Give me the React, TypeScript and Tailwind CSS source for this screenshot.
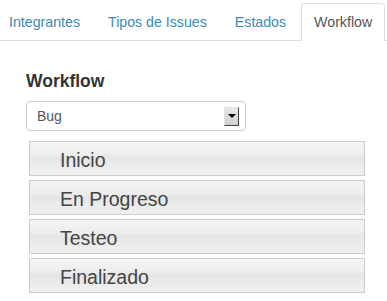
import React from "react";

const tabs = ["Integrantes", "Tipos de Issues", "Estados", "Workflow"];
const states = ["Inicio", "En Progreso", "Testeo", "Finalizado"];

export default function App() {
  return (
    <div className="w-[387px] h-[301px] bg-white overflow-hidden font-['Liberation_Sans',Arial,sans-serif]">
      <ul className="flex flex-nowrap border-b border-[#dddddd] pt-[3px] ml-[-4px] w-[391px] list-none m-0">
        {tabs.map((t, i) => {
          const active = i === tabs.length - 1;
          return (
            <li key={t} className="mb-[-1px] shrink-0">
              <a
                className={
                  active
                    ? "block whitespace-nowrap px-3 py-2 leading-5 text-[14.2px] mr-[2px] border border-[#dddddd] border-b-transparent rounded-t-[4px] bg-white text-[#555555]"
                    : "block whitespace-nowrap px-3 py-2 leading-5 text-[14.2px] mr-[2px] border border-transparent rounded-t-[4px] text-[#3a8cb0]"
                }
              >
                {t}
              </a>
            </li>
          );
        })}
      </ul>

      <div className="pl-[26px] pt-[30px]">
        <h4 className="text-[17.5px] font-bold leading-5 text-[#333333] m-0">Workflow</h4>
        <div className="mt-[10px] w-[220px] h-[30px] border border-[#cccccc] rounded-[4px] bg-white flex items-center justify-between pl-[10px] pr-[6px]">
          <span className="text-[14px] text-[#555555] leading-5">Bug</span>
          <div className="w-[15px] h-[19px] border border-[#404040] border-t-[#e0e0e0] border-l-[#e0e0e0] bg-gradient-to-b from-[#e8e8e8] to-[#cfcfcf] flex items-center justify-center">
            <div className="w-0 h-0 border-l-[4px] border-r-[4px] border-t-[4px] border-l-transparent border-r-transparent border-t-black" />
          </div>
        </div>

        <div className="mt-[10px] ml-[3px] w-[336px] flex flex-col gap-[4px]">
          {states.map((s) => (
            <div
              key={s}
              className="h-[35px] border border-[#cccccc] bg-[linear-gradient(to_bottom,#f4f4f4_0%,#eeeeee_35%,#e5e5e5_50%,#ececec_75%,#efefef_100%)] flex items-center pl-[30px] pt-[3px]"
            >
              <span className="whitespace-nowrap text-[19.5px] text-[#444444] leading-6">{s}</span>
            </div>
          ))}
        </div>
      </div>
    </div>
  );
}
